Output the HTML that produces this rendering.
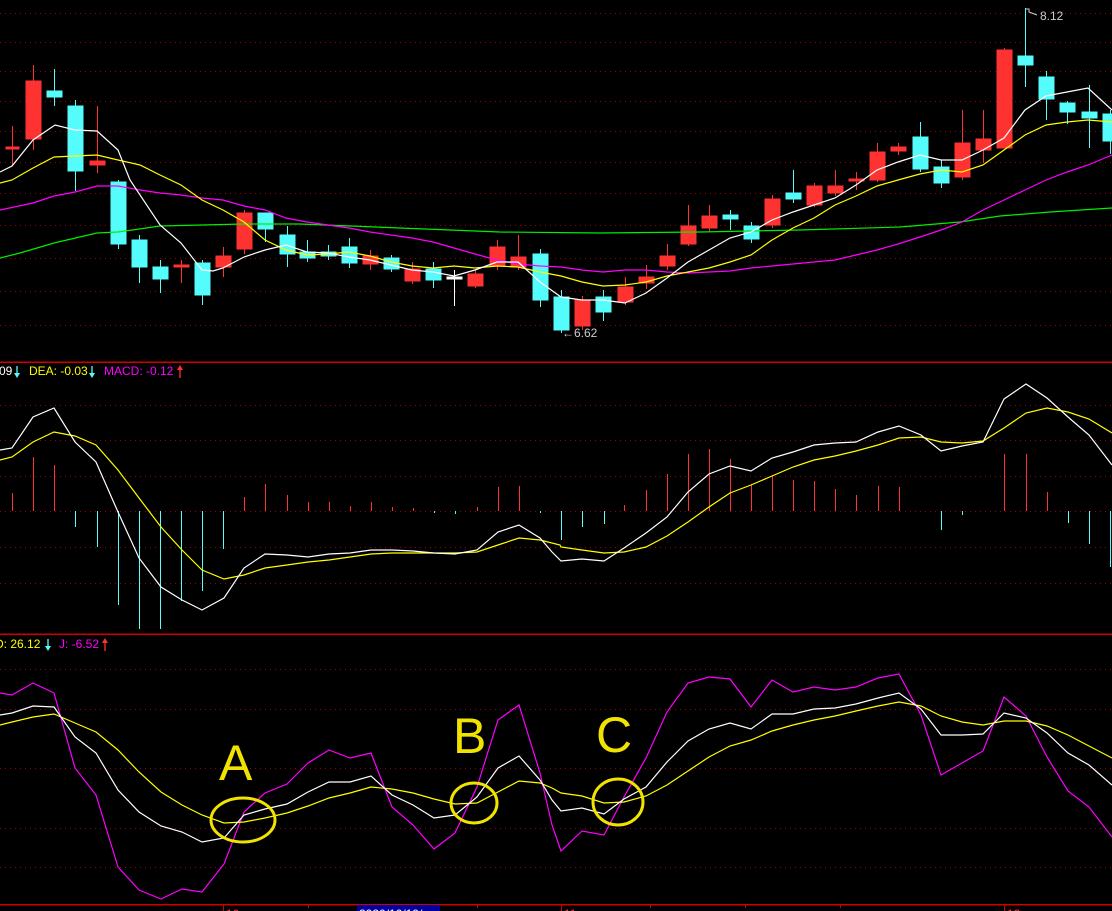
<!DOCTYPE html>
<html><head><meta charset="utf-8"><style>
html,body{margin:0;padding:0;background:#000;width:1112px;height:911px;overflow:hidden}
svg{display:block}
text{font-family:"Liberation Sans","Noto Sans CJK SC",sans-serif}
</style></head><body>
<svg width="1112" height="911" viewBox="0 0 1112 911" xmlns="http://www.w3.org/2000/svg">
<defs>
<g id="dn"><line x1="0" y1="-11" x2="0" y2="-1" stroke-width="1.3"/><path d="M-3,-4 L3,-4 L0,1 Z" stroke="none"/></g>
<g id="up"><line x1="0" y1="1" x2="0" y2="-9" stroke-width="1.3"/><path d="M-3,-7 L3,-7 L0,-12 Z" stroke="none"/></g>
</defs>
<rect width="1112" height="911" fill="#000"/>
<g stroke="#a00000" stroke-width="1" stroke-dasharray="1,4" shape-rendering="crispEdges">
<line x1="0" y1="13.5" x2="1112" y2="13.5"/><line x1="0" y1="42.5" x2="1112" y2="42.5"/>
<line x1="0" y1="71.5" x2="1112" y2="71.5"/><line x1="0" y1="101.5" x2="1112" y2="101.5"/>
<line x1="0" y1="131.5" x2="1112" y2="131.5"/><line x1="0" y1="162.5" x2="1112" y2="162.5"/>
<line x1="0" y1="193.5" x2="1112" y2="193.5"/><line x1="0" y1="225.5" x2="1112" y2="225.5"/>
<line x1="0" y1="258.5" x2="1112" y2="258.5"/><line x1="0" y1="291.5" x2="1112" y2="291.5"/>
<line x1="0" y1="325.5" x2="1112" y2="325.5"/>
<line x1="0" y1="405.5" x2="1112" y2="405.5"/><line x1="0" y1="440.5" x2="1112" y2="440.5"/>
<line x1="0" y1="476.5" x2="1112" y2="476.5"/><line x1="0" y1="511.5" x2="1112" y2="511.5"/>
<line x1="0" y1="547.5" x2="1112" y2="547.5"/><line x1="0" y1="583.5" x2="1112" y2="583.5"/>
<line x1="0" y1="669.5" x2="1112" y2="669.5"/><line x1="0" y1="709.5" x2="1112" y2="709.5"/>
<line x1="0" y1="768.5" x2="1112" y2="768.5"/><line x1="0" y1="828.5" x2="1112" y2="828.5"/>
<line x1="0" y1="867.5" x2="1112" y2="867.5"/>
</g>
<g stroke="#d00000" stroke-width="1.5" shape-rendering="crispEdges">
<line x1="0" y1="362" x2="1112" y2="362"/><line x1="0" y1="634" x2="1112" y2="634"/><line x1="0" y1="904.5" x2="1112" y2="904.5"/>
</g>
<g shape-rendering="crispEdges">
<g stroke="#ff3232" fill="#ff3232">
<line x1="12.5" y1="126" x2="12.5" y2="165"/><rect x="6" y="147" width="13" height="2"/>
<line x1="33.5" y1="65" x2="33.5" y2="150"/><rect x="26" y="81" width="15" height="58"/>
<line x1="97.5" y1="106" x2="97.5" y2="173"/><rect x="90" y="161" width="15" height="4"/>
<line x1="181.5" y1="260" x2="181.5" y2="283"/><rect x="174" y="265" width="15" height="2"/>
<line x1="223.5" y1="247" x2="223.5" y2="277"/><rect x="216" y="256" width="15" height="11"/>
<line x1="244.5" y1="210" x2="244.5" y2="254"/><rect x="237" y="213" width="15" height="36"/>
<line x1="370.5" y1="250" x2="370.5" y2="270"/><rect x="363" y="256" width="15" height="8"/>
<line x1="412.5" y1="262" x2="412.5" y2="284"/><rect x="405" y="269" width="15" height="12"/>
<line x1="475.5" y1="270" x2="475.5" y2="288"/><rect x="468" y="274" width="15" height="12"/>
<line x1="497.5" y1="240" x2="497.5" y2="270"/><rect x="490" y="247" width="15" height="19"/>
<line x1="518.5" y1="235" x2="518.5" y2="270"/><rect x="511" y="257" width="15" height="10"/>
<line x1="582.5" y1="296" x2="582.5" y2="330"/><rect x="575" y="300" width="15" height="26"/>
<line x1="625.5" y1="277" x2="625.5" y2="305"/><rect x="618" y="287" width="15" height="15"/>
<line x1="646.5" y1="265" x2="646.5" y2="289"/><rect x="639" y="277" width="15" height="6"/>
<line x1="667.5" y1="244" x2="667.5" y2="270"/><rect x="660" y="256" width="15" height="10"/>
<line x1="688.5" y1="205" x2="688.5" y2="246"/><rect x="681" y="226" width="15" height="18"/>
<line x1="709.5" y1="205" x2="709.5" y2="232"/><rect x="702" y="216" width="15" height="12"/>
<line x1="772.5" y1="195" x2="772.5" y2="228"/><rect x="765" y="199" width="15" height="26"/>
<line x1="814.5" y1="183" x2="814.5" y2="207"/><rect x="807" y="186" width="15" height="19"/>
<line x1="835.5" y1="170" x2="835.5" y2="196"/><rect x="828" y="186" width="15" height="7"/>
<line x1="856.5" y1="172" x2="856.5" y2="190"/><rect x="849" y="179" width="15" height="2"/>
<line x1="877.5" y1="143" x2="877.5" y2="182"/><rect x="870" y="152" width="15" height="28"/>
<line x1="898.5" y1="143" x2="898.5" y2="155"/><rect x="891" y="147" width="15" height="4"/>
<line x1="962.5" y1="110" x2="962.5" y2="180"/><rect x="955" y="143" width="15" height="34"/>
<line x1="983.5" y1="110" x2="983.5" y2="163"/><rect x="976" y="139" width="15" height="11"/>
<line x1="1004.5" y1="48" x2="1004.5" y2="148"/><rect x="997" y="50" width="15" height="98"/>
</g>
<g stroke="#54fcfc" fill="#54fcfc">
<line x1="54.5" y1="69" x2="54.5" y2="106"/><rect x="47" y="91" width="15" height="6"/>
<line x1="75.5" y1="100" x2="75.5" y2="191"/><rect x="68" y="106" width="15" height="65"/>
<line x1="118.5" y1="180" x2="118.5" y2="249"/><rect x="111" y="182" width="15" height="62"/>
<line x1="139.5" y1="235" x2="139.5" y2="283"/><rect x="132" y="240" width="15" height="27"/>
<line x1="160.5" y1="260" x2="160.5" y2="293"/><rect x="153" y="267" width="15" height="12"/>
<line x1="202.5" y1="260" x2="202.5" y2="305"/><rect x="195" y="263" width="15" height="32"/>
<line x1="265.5" y1="213" x2="265.5" y2="242"/><rect x="258" y="213" width="15" height="16"/>
<line x1="287.5" y1="226" x2="287.5" y2="267"/><rect x="280" y="235" width="15" height="19"/>
<line x1="307.5" y1="240" x2="307.5" y2="262"/><rect x="300" y="252" width="15" height="6"/>
<line x1="328.5" y1="245" x2="328.5" y2="260"/><rect x="321" y="252" width="15" height="4"/>
<line x1="349.5" y1="238" x2="349.5" y2="268"/><rect x="342" y="247" width="15" height="16"/>
<line x1="391.5" y1="255" x2="391.5" y2="272"/><rect x="384" y="258" width="15" height="11"/>
<line x1="433.5" y1="262" x2="433.5" y2="288"/><rect x="426" y="269" width="15" height="11"/>
<line x1="540.5" y1="249" x2="540.5" y2="307"/><rect x="533" y="254" width="15" height="46"/>
<line x1="561.5" y1="290" x2="561.5" y2="333"/><rect x="554" y="297" width="15" height="33"/>
<line x1="603.5" y1="290" x2="603.5" y2="321"/><rect x="596" y="297" width="15" height="15"/>
<line x1="730.5" y1="210" x2="730.5" y2="230"/><rect x="723" y="215" width="15" height="4"/>
<line x1="751.5" y1="222" x2="751.5" y2="243"/><rect x="744" y="226" width="15" height="13"/>
<line x1="793.5" y1="170" x2="793.5" y2="203"/><rect x="786" y="193" width="15" height="6"/>
<line x1="920.5" y1="122" x2="920.5" y2="172"/><rect x="913" y="137" width="15" height="32"/>
<line x1="941.5" y1="160" x2="941.5" y2="188"/><rect x="934" y="167" width="15" height="16"/>
<line x1="1025.5" y1="8" x2="1025.5" y2="87"/><rect x="1018" y="56" width="15" height="9"/>
<line x1="1046.5" y1="71" x2="1046.5" y2="120"/><rect x="1039" y="77" width="15" height="22"/>
<line x1="1067.5" y1="101" x2="1067.5" y2="124"/><rect x="1060" y="103" width="15" height="9"/>
<line x1="1089.5" y1="85" x2="1089.5" y2="148"/><rect x="1082" y="112" width="15" height="6"/>
<line x1="1110.5" y1="110" x2="1110.5" y2="154"/><rect x="1103" y="114" width="15" height="27"/>
</g>
<g stroke="#ffffff" fill="#ffffff">
<line x1="454.5" y1="270" x2="454.5" y2="306"/><rect x="447" y="277" width="15" height="2"/>
</g>
</g>
<g fill="none" stroke-width="1.2">
<polyline stroke="#00ee00" points="0,258 20,253 54,243 97,233 118,232 160,226 244,224 300,224 400,228 500,232 600,233 700,232 800,230 900,227 960,222 1000,216 1050,212 1112,208"/>
<polyline stroke="#ff00ff" points="0,210 33,203 54,196 75,192 97,186 118,186 140,190 160,193 181,195 202,198 223,200 244,206 265,210 286,218 307,222 328,225 349,228 370,232 391,235 412,238 433,242 454,248 475,254 497,260 518,264 540,266 561,267 582,270 603,272 625,270 646,270 667,272 688,273 709,272 730,271 751,268 772,266 793,264 814,262 835,260 856,255 877,250 898,244 920,237 941,230 962,222 983,210 1004,200 1025,190 1046,180 1067,172 1088,165 1112,155"/>
<polyline stroke="#ffff00" points="0,183 12,180 33,168 54,157 75,156 97,155 118,160 140,165 160,175 181,185 202,200 223,210 244,222 265,240 286,250 307,255 328,254 349,252 370,256 391,262 412,266 433,268 454,266 475,268 497,266 518,267 540,272 561,276 582,282 603,286 625,285 646,282 667,276 688,272 709,268 730,262 751,255 772,240 793,228 814,218 835,205 856,196 877,186 898,180 920,174 941,170 962,172 983,165 1004,150 1025,135 1046,125 1067,122 1088,120 1112,122"/>
<polyline stroke="#ffffff" points="0,172 12,166 33,140 55,125 75,130 97,131 118,150 130,180 160,225 181,243 202,270 213,271 223,268 244,257 265,250 286,245 307,252 328,253 349,257 370,260 391,265 412,270 433,272 454,276 475,270 497,262 518,262 540,282 561,297 582,300 603,300 625,303 646,293 667,278 688,262 709,250 730,238 751,232 772,220 793,212 814,205 835,198 856,185 877,170 898,162 920,155 941,160 962,160 983,150 1004,138 1025,110 1046,96 1067,92 1088,88 1112,110"/>
</g>
<polyline fill="none" stroke="#cccccc" points="1026,9 1029,9 1029,12 1037,15"/>
<text x="1040" y="20" fill="#cccccc" font-size="12">8.12</text>
<text x="562" y="337" fill="#cccccc" font-size="12">←6.62</text>

<!-- MACD labels -->
<text x="-1" y="375" font-size="12" fill="#ffffff">09</text>
<use href="#dn" x="17" y="377" stroke="#54fcfc" fill="#54fcfc"/>
<text x="29" y="375" font-size="12" fill="#ffff00">DEA: -0.03</text>
<use href="#dn" x="92" y="377" stroke="#54fcfc" fill="#54fcfc"/>
<text x="104" y="375" font-size="12" fill="#ff00ff">MACD: -0.12</text>
<use href="#up" x="180" y="377" stroke="#ff3232" fill="#ff3232"/>
<g stroke-width="1.3" shape-rendering="crispEdges">
<g stroke="#ff3232">
<line x1="12.5" y1="511" x2="12.5" y2="493"/><line x1="33.5" y1="511" x2="33.5" y2="457"/><line x1="54.5" y1="511" x2="54.5" y2="465"/>
<line x1="244.5" y1="511" x2="244.5" y2="497"/><line x1="265.5" y1="511" x2="265.5" y2="484"/><line x1="287.5" y1="511" x2="287.5" y2="495"/>
<line x1="308.5" y1="511" x2="308.5" y2="502"/><line x1="329.5" y1="511" x2="329.5" y2="502"/><line x1="350.5" y1="511" x2="350.5" y2="506"/>
<line x1="371.5" y1="511" x2="371.5" y2="502"/><line x1="392.5" y1="511" x2="392.5" y2="507"/><line x1="413.5" y1="511" x2="413.5" y2="508"/>
<line x1="477.5" y1="511" x2="477.5" y2="507"/><line x1="498.5" y1="511" x2="498.5" y2="487"/><line x1="519.5" y1="511" x2="519.5" y2="486"/>
<line x1="624.5" y1="511" x2="624.5" y2="505"/><line x1="646.5" y1="511" x2="646.5" y2="490"/><line x1="667.5" y1="511" x2="667.5" y2="474"/>
<line x1="688.5" y1="511" x2="688.5" y2="454"/><line x1="709.5" y1="511" x2="709.5" y2="449"/><line x1="730.5" y1="511" x2="730.5" y2="459"/>
<line x1="751.5" y1="511" x2="751.5" y2="484"/><line x1="772.5" y1="511" x2="772.5" y2="476"/><line x1="793.5" y1="511" x2="793.5" y2="480"/>
<line x1="814.5" y1="511" x2="814.5" y2="481"/><line x1="835.5" y1="511" x2="835.5" y2="489"/><line x1="856.5" y1="511" x2="856.5" y2="495"/>
<line x1="878.5" y1="511" x2="878.5" y2="486"/><line x1="899.5" y1="511" x2="899.5" y2="487"/>
<line x1="1004.5" y1="511" x2="1004.5" y2="454"/><line x1="1026.5" y1="511" x2="1026.5" y2="454"/><line x1="1047.5" y1="511" x2="1047.5" y2="492"/>
</g>
<g stroke="#54fcfc">
<line x1="75.5" y1="511" x2="75.5" y2="527"/><line x1="97.5" y1="511" x2="97.5" y2="547"/><line x1="118.5" y1="511" x2="118.5" y2="605"/>
<line x1="139.5" y1="511" x2="139.5" y2="629"/><line x1="160.5" y1="511" x2="160.5" y2="629"/><line x1="181.5" y1="511" x2="181.5" y2="601"/>
<line x1="202.5" y1="511" x2="202.5" y2="591"/><line x1="223.5" y1="511" x2="223.5" y2="549"/>
<line x1="434.5" y1="511" x2="434.5" y2="513"/><line x1="455.5" y1="511" x2="455.5" y2="514"/><line x1="540.5" y1="511" x2="540.5" y2="513"/>
<line x1="561.5" y1="511" x2="561.5" y2="540"/><line x1="582.5" y1="511" x2="582.5" y2="527"/><line x1="604.5" y1="511" x2="604.5" y2="524"/>
<line x1="941.5" y1="511" x2="941.5" y2="530"/><line x1="962.5" y1="511" x2="962.5" y2="515"/>
<line x1="1068.5" y1="511" x2="1068.5" y2="523"/><line x1="1089.5" y1="511" x2="1089.5" y2="544"/><line x1="1110.5" y1="511" x2="1110.5" y2="567"/>
</g>
</g>
<g fill="none" stroke-width="1.2">
<polyline stroke="#ffff00" points="0,460 12,457 33,442 54,432 75,436 96,445 118,470 139,498 161,527 182,550 202,570 224,579 244,575 265,568 287,565 308,562 329,560 350,557 371,554 392,553 413,553 434,553 455,553 477,552 498,545 519,538 540,540 560,545 561,547 582,550 604,553 624,552 646,547 667,536 688,522 709,507 730,493 751,485 772,476 793,467 814,460 835,456 856,451 878,445 899,438 921,437 941,442 962,443 983,441 1004,428 1026,413 1047,408 1068,412 1089,419 1112,433"/>
<polyline stroke="#ffffff" points="0,450 12,448 33,417 54,408 75,442 96,462 118,512 139,558 161,587 182,600 202,610 224,598 244,568 265,554 287,555 308,557 329,554 350,553 371,550 392,550 413,551 434,553 455,554 477,550 498,532 519,525 540,538 552,552 561,561 582,559 604,561 624,548 646,533 667,517 688,492 709,474 730,466 751,471 772,458 793,452 814,445 835,443 856,442 878,432 899,426 921,435 941,451 962,446 983,442 1004,399 1026,384 1047,398 1068,417 1089,435 1112,465"/>
</g>

<!-- KDJ labels -->
<text x="-5" y="648" font-size="12" fill="#ffff00">D: 26.12</text>
<use href="#dn" x="48" y="650" stroke="#54fcfc" fill="#54fcfc"/>
<text x="59" y="648" font-size="12" fill="#ff00ff">J: -6.52</text>
<use href="#up" x="105" y="650" stroke="#ff3232" fill="#ff3232"/>
<g fill="none" stroke-width="1.2">
<polyline stroke="#ff00ff" points="0,693 12,695 33,683 54,693 75,768 96,795 118,867 139,890 161,899 182,889 202,892 224,864 244,812 265,793 287,784 308,763 329,750 350,758 371,753 392,807 413,825 434,849 455,833 477,787 498,720 519,705 540,773 552,825 561,851 582,831 604,835 624,797 646,758 667,712 688,683 709,677 730,679 751,707 772,680 793,692 814,687 835,690 856,687 878,678 899,674 921,715 941,775 962,763 983,751 1004,697 1026,716 1047,757 1068,791 1089,807 1112,837"/>
<polyline stroke="#ffff00" points="0,725 12,722 33,717 54,714 75,723 96,732 118,750 139,772 161,792 182,805 202,815 224,823 244,822 265,818 287,813 308,806 329,798 350,793 371,787 392,789 413,793 434,799 455,804 477,803 498,792 519,781 540,783 552,788 561,793 582,796 604,803 624,802 646,796 667,785 688,771 709,757 730,746 751,740 772,731 793,725 814,720 835,716 856,711 878,706 899,702 921,706 941,716 962,722 983,725 1004,721 1026,721 1047,726 1068,735 1089,746 1112,758"/>
<polyline stroke="#ffffff" points="0,715 12,713 33,706 54,707 75,737 96,753 118,790 139,812 161,826 182,832 202,842 224,838 244,815 265,809 287,804 308,792 329,782 350,782 371,776 392,795 413,805 434,818 455,815 477,797 498,768 519,756 540,780 552,800 561,811 582,808 604,814 624,799 646,787 667,762 688,741 709,729 730,723 751,729 772,714 793,714 814,709 835,708 856,704 878,698 899,693 921,709 941,735 962,735 983,734 1004,713 1026,718 1047,733 1068,753 1089,765 1112,785"/>
</g>
<g fill="none" stroke="#f2e200" stroke-width="3">
<ellipse cx="243" cy="820" rx="32" ry="22"/>
<ellipse cx="474" cy="803" rx="23" ry="20"/>
<ellipse cx="618" cy="802" rx="25" ry="23"/>
</g>
<g fill="#f2e200" font-size="50">
<text x="219" y="780">A</text>
<text x="453" y="753">B</text>
<text x="596" y="752">C</text>
</g>

<!-- axis -->
<g stroke="#d00000" shape-rendering="crispEdges">
<line x1="223.5" y1="905" x2="223.5" y2="911"/><line x1="308.5" y1="905" x2="308.5" y2="908"/>
<line x1="477.5" y1="905" x2="477.5" y2="908"/><line x1="561.5" y1="905" x2="561.5" y2="911"/>
<line x1="650.5" y1="905" x2="650.5" y2="908"/><line x1="745.5" y1="905" x2="745.5" y2="908"/>
<line x1="840.5" y1="905" x2="840.5" y2="908"/><line x1="1004.5" y1="905" x2="1004.5" y2="911"/>
</g>
<rect x="357" y="905" width="83" height="6" fill="#0000a0"/>
<text x="226" y="918" font-size="12" fill="#ff3232">10</text>
<text x="359" y="918" font-size="12" fill="#ffffff">2020/10/19/</text>
<text x="564" y="918" font-size="12" fill="#ff3232">11</text>
<text x="1007" y="918" font-size="12" fill="#ff3232">12</text>
</svg>
</body></html>
